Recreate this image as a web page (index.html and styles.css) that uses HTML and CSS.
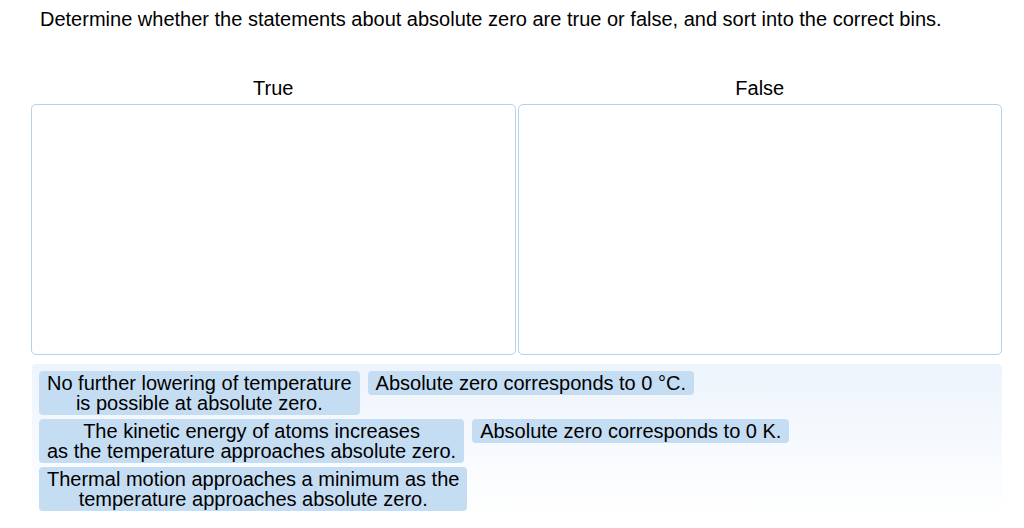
FILE: index.html
```html
<!DOCTYPE html>
<html>
<head>
<meta charset="utf-8">
<link rel="stylesheet" href="styles.css">
</head>
<body>
<p class="prompt">Determine whether the statements about absolute zero are true or false, and sort into the correct bins.</p>
<div class="bins">
  <div class="bin">
    <div class="bin-label">True</div>
    <div class="bin-box"></div>
  </div>
  <div class="bin">
    <div class="bin-label">False</div>
    <div class="bin-box"></div>
  </div>
</div>
<div class="pool">
  <div class="chip">No further lowering of temperature<br>is possible at absolute zero.</div>
  <div class="chip">Absolute zero corresponds to 0 °C.</div>
  <div class="chip">The kinetic energy of atoms increases<br>as the temperature approaches absolute zero.</div>
  <div class="chip">Absolute zero corresponds to 0 K.</div>
  <div class="chip">Thermal motion approaches a minimum as the<br>temperature approaches absolute zero.</div>
</div>
</body>
</html>
```
FILE: styles.css
```css
body {
  margin: 0;
  font-family: "Liberation Sans", Arial, sans-serif;
  color: #000;
  background: #fff;
}
.prompt {
  margin: 0;
  padding: 7px 0 0 40px;
  font-size: 20px;
  line-height: 24px;
}
.bins {
  display: flex;
  gap: 2px;
  margin: 45px 22px 0 31px;
}
.bin {
  flex: 1;
  display: flex;
  flex-direction: column;
}
.bin-label {
  text-align: center;
  font-size: 20px;
  line-height: 24px;
  margin-bottom: 4px;
}
.bin-box {
  height: 249px;
  border: 1px solid #b0d2f3;
  border-radius: 5px;
}
.pool {
  margin: 9px 22px 0 32px;
  padding: 7px;
  min-height: 132px;
  border-radius: 4px;
  background: linear-gradient(#edf4fc, #ffffff);
  display: flex;
  flex-wrap: wrap;
  align-items: flex-start;
  align-content: flex-start;
  gap: 4px 8px;
}
.chip {
  background: #c5ddf3;
  border-radius: 4px;
  padding: 2px 8px;
  font-size: 20px;
  line-height: 20px;
  text-align: center;
}
```
